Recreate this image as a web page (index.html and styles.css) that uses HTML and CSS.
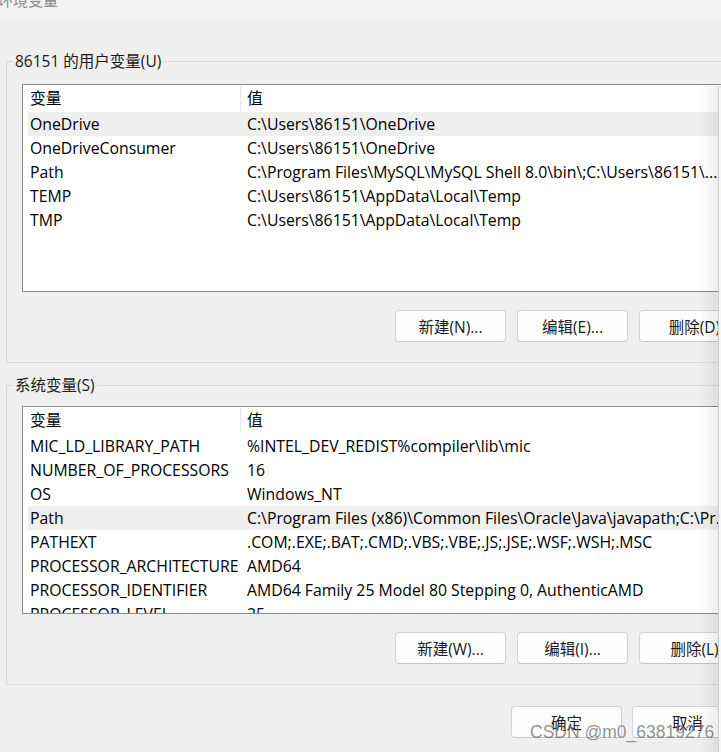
FILE: index.html
```html
<!DOCTYPE html>
<html lang="zh-CN">
<head>
<meta charset="utf-8">
<title>环境变量</title>
<link rel="stylesheet" href="styles.css">
</head>
<body>
<div class="window">
  <div class="titlebar"><span class="title">环境变量</span></div>

  <fieldset class="group">
    <legend>86151 的用户变量(U)</legend>
    <div class="list">
      <div class="list-head">
        <div class="col-name">变量</div>
        <div class="col-value">值</div>
      </div>
      <div class="row selected"><div class="col-name">OneDrive</div><div class="col-value">C:\Users\86151\OneDrive</div></div>
      <div class="row"><div class="col-name">OneDriveConsumer</div><div class="col-value">C:\Users\86151\OneDrive</div></div>
      <div class="row"><div class="col-name">Path</div><div class="col-value">C:\Program Files\MySQL\MySQL Shell 8.0\bin\;C:\Users\86151\...</div></div>
      <div class="row"><div class="col-name">TEMP</div><div class="col-value">C:\Users\86151\AppData\Local\Temp</div></div>
      <div class="row"><div class="col-name">TMP</div><div class="col-value">C:\Users\86151\AppData\Local\Temp</div></div>
    </div>
    <div class="actions">
      <button class="btn">新建(N)...</button>
      <button class="btn">编辑(E)...</button>
      <button class="btn">删除(D)</button>
    </div>
  </fieldset>

  <fieldset class="group group-system">
    <legend>系统变量(S)</legend>
    <div class="list">
      <div class="list-head">
        <div class="col-name">变量</div>
        <div class="col-value">值</div>
      </div>
      <div class="row"><div class="col-name">MIC_LD_LIBRARY_PATH</div><div class="col-value">%INTEL_DEV_REDIST%compiler\lib\mic</div></div>
      <div class="row"><div class="col-name">NUMBER_OF_PROCESSORS</div><div class="col-value">16</div></div>
      <div class="row"><div class="col-name">OS</div><div class="col-value">Windows_NT</div></div>
      <div class="row selected"><div class="col-name">Path</div><div class="col-value">C:\Program Files (x86)\Common Files\Oracle\Java\javapath;C:\Pr...</div></div>
      <div class="row"><div class="col-name">PATHEXT</div><div class="col-value">.COM;.EXE;.BAT;.CMD;.VBS;.VBE;.JS;.JSE;.WSF;.WSH;.MSC</div></div>
      <div class="row"><div class="col-name">PROCESSOR_ARCHITECTURE</div><div class="col-value">AMD64</div></div>
      <div class="row"><div class="col-name">PROCESSOR_IDENTIFIER</div><div class="col-value">AMD64 Family 25 Model 80 Stepping 0, AuthenticAMD</div></div>
      <div class="row"><div class="col-name">PROCESSOR_LEVEL</div><div class="col-value">25</div></div>
    </div>
    <div class="actions">
      <button class="btn">新建(W)...</button>
      <button class="btn">编辑(I)...</button>
      <button class="btn">删除(L)</button>
    </div>
  </fieldset>

  <div class="footer">
    <button class="btn">确定</button>
    <button class="btn">取消</button>
  </div>

  <div class="edge"></div>
  <div class="watermark">CSDN @m0_63819276</div>
</div>
</body>
</html>
```

FILE: styles.css
```css
html, body {
  margin: 0;
  padding: 0;
  overflow: hidden;
  background: #efefef;
}

body {
  font-family: "Open Sans", "Noto Sans CJK SC", sans-serif;
  font-size: 15.8px;
  color: #000;
}

.window {
  position: relative;
  width: 780px;
  height: 752px;
  background: #efefef;
}

.titlebar {
  height: 20px;
  overflow: hidden;
  background: #f3f3f3;
}

.title {
  display: block;
  margin-top: -8px;
  margin-left: -2px;
  font-family: "Noto Sans CJK SC", sans-serif;
  font-size: 15px;
  line-height: 15px;
  color: #8c8c8c;
}

.group {
  margin: 31px 0 0 6px;
  padding: 13px 15px 20px 15px;
  border: 1px solid #d9d9d9;
  min-width: 0;
  width: 742px;
}

.group-system {
  margin-top: 12px;
  padding-top: 11px;
}

.group legend {
  margin-left: -9px;
  padding: 0 2px;
  line-height: 20px;
  font-size: 15.5px;
  color: #1a1a1a;
}

.list {
  height: 206px;
  border: 1px solid #8a8a8a;
  background: #fff;
  padding-left: 5px;
  overflow: hidden;
}

.list-head {
  display: flex;
  height: 27px;
  line-height: 27px;
}

.list-head .col-name {
  border-right: 1px solid #e5e5e5;
  margin: 1px 0 1px;
  line-height: 25px;
}

.row {
  display: flex;
  height: 24px;
  line-height: 24px;
}

.row.selected {
  background: #efefef;
}

.col-name {
  box-sizing: border-box;
  width: 213px;
  flex: none;
  padding-left: 2px;
  white-space: nowrap;
  overflow: hidden;
}

.col-value {
  flex: 1;
  padding-left: 6px;
  white-space: nowrap;
  overflow: hidden;
}

.actions {
  display: flex;
  justify-content: flex-end;
  gap: 11px;
  margin-top: 18px;
  padding-right: 14px;
}

.btn {
  box-sizing: border-box;
  width: 111px;
  height: 32px;
  padding: 0;
  border: 1px solid #d3d3d3;
  border-bottom-color: #c4c4c4;
  border-radius: 4px;
  background: #fdfdfd;
  font-family: "Open Sans", "Noto Sans CJK SC", sans-serif;
  font-size: 15.5px;
  color: #1a1a1a;
}

.footer {
  display: flex;
  justify-content: flex-end;
  gap: 10px;
  margin-top: 21px;
  padding-right: 37px;
}

.edge {
  position: absolute;
  top: 86px;
  left: 700px;
  width: 18px;
  bottom: 0;
  background: linear-gradient(to right, rgba(0, 0, 0, 0), rgba(0, 0, 0, 0.07));
}

.edge::after {
  content: "";
  position: absolute;
  top: 0;
  left: 18px;
  width: 10px;
  bottom: 0;
  background: #f7f7f7;
  border-left: 1px solid #cfcfcf;
  border-top: 1px solid #cfcfcf;
  border-top-left-radius: 4px;
}

.watermark {
  position: absolute;
  left: 530px;
  top: 722px;
  font-family: "Liberation Sans", Arial, sans-serif;
  font-size: 17.5px;
  color: rgba(110, 110, 110, 0.75);
  white-space: nowrap;
}
```
